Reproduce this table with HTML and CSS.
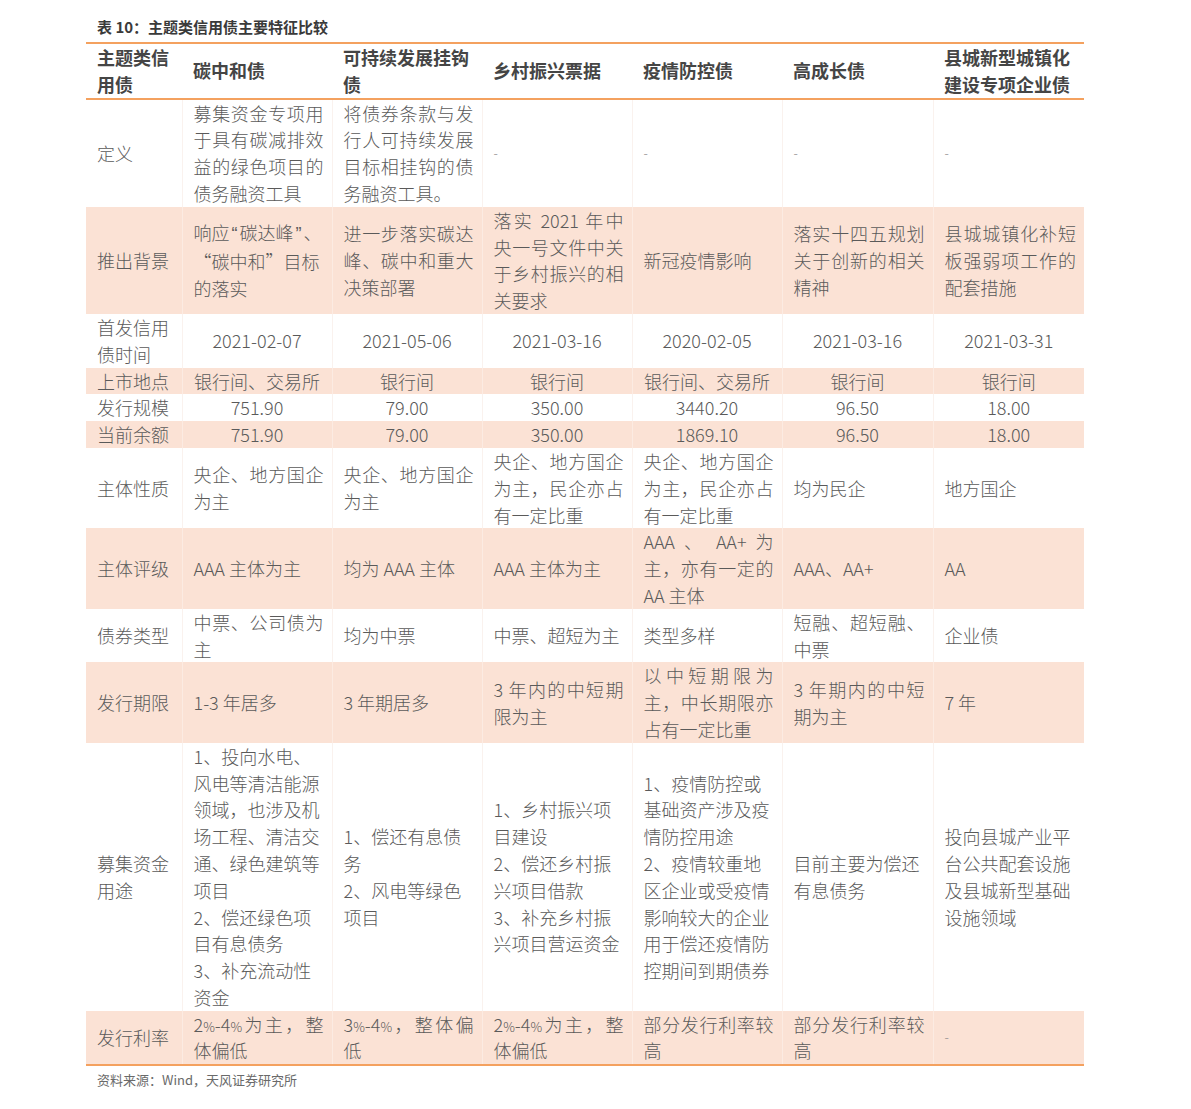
FILE: index.html
```html
<!DOCTYPE html>
<html lang="zh-CN">
<head>
<meta charset="utf-8">
<title>主题类信用债主要特征比较</title>
<link rel="stylesheet" href="styles.css">
</head>
<body>
<div class="page">
  <div class="caption">表 10：主题类信用债主要特征比较</div>
  <table class="cmp">
    <colgroup>
      <col class="c-label">
      <col class="c-std"><col class="c-std"><col class="c-std"><col class="c-std">
      <col class="c-wide"><col class="c-wide">
    </colgroup>
    <thead>
      <tr>
        <th>主题类信用债</th>
        <th>碳中和债</th>
        <th>可持续发展挂钩债</th>
        <th>乡村振兴票据</th>
        <th>疫情防控债</th>
        <th>高成长债</th>
        <th>县城新型城镇化建设专项企业债</th>
      </tr>
    </thead>
    <tbody>
      <tr>
        <td class="lab">定义</td>
        <td>募集资金专项用于具有碳减排效益的绿色项目的债务融资工具</td>
        <td>将债券条款与发行人可持续发展目标相挂钩的债务融资工具。</td>
        <td class="dash">-</td>
        <td class="dash">-</td>
        <td class="dash">-</td>
        <td class="dash">-</td>
      </tr>
      <tr class="pink">
        <td class="lab">推出背景</td>
        <td class="lft">响应<span class="q">“</span>碳达峰<span class="q">”</span>、<br>“碳中和”目标<br>的落实</td>
        <td>进一步落实碳达峰、碳中和重大决策部署</td>
        <td>落实 2021 年中央一号文件中关于乡村振兴的相关要求</td>
        <td>新冠疫情影响</td>
        <td>落实十四五规划关于创新的相关精神</td>
        <td>县城城镇化补短板强弱项工作的配套措施</td>
      </tr>
      <tr>
        <td class="lab">首发信用债时间</td>
        <td class="ctr">2021-02-07</td>
        <td class="ctr">2021-05-06</td>
        <td class="ctr">2021-03-16</td>
        <td class="ctr">2020-02-05</td>
        <td class="ctr">2021-03-16</td>
        <td class="ctr">2021-03-31</td>
      </tr>
      <tr class="pink">
        <td class="lab">上市地点</td>
        <td class="ctr">银行间、交易所</td>
        <td class="ctr">银行间</td>
        <td class="ctr">银行间</td>
        <td class="ctr">银行间、交易所</td>
        <td class="ctr">银行间</td>
        <td class="ctr">银行间</td>
      </tr>
      <tr>
        <td class="lab">发行规模</td>
        <td class="ctr">751.90</td>
        <td class="ctr">79.00</td>
        <td class="ctr">350.00</td>
        <td class="ctr">3440.20</td>
        <td class="ctr">96.50</td>
        <td class="ctr">18.00</td>
      </tr>
      <tr class="pink">
        <td class="lab">当前余额</td>
        <td class="ctr">751.90</td>
        <td class="ctr">79.00</td>
        <td class="ctr">350.00</td>
        <td class="ctr">1869.10</td>
        <td class="ctr">96.50</td>
        <td class="ctr">18.00</td>
      </tr>
      <tr>
        <td class="lab">主体性质</td>
        <td>央企、地方国企为主</td>
        <td>央企、地方国企为主</td>
        <td>央企、地方国企为主，民企亦占有一定比重</td>
        <td>央企、地方国企为主，民企亦占有一定比重</td>
        <td>均为民企</td>
        <td>地方国企</td>
      </tr>
      <tr class="pink">
        <td class="lab">主体评级</td>
        <td>AAA 主体为主</td>
        <td>均为 AAA 主体</td>
        <td>AAA 主体为主</td>
        <td>AAA 、 AA+ 为主，亦有一定的 AA 主体</td>
        <td>AAA、AA+</td>
        <td>AA</td>
      </tr>
      <tr>
        <td class="lab">债券类型</td>
        <td>中票、公司债为主</td>
        <td>均为中票</td>
        <td>中票、超短为主</td>
        <td>类型多样</td>
        <td>短融、超短融、中票</td>
        <td>企业债</td>
      </tr>
      <tr class="pink">
        <td class="lab">发行期限</td>
        <td>1-3 年居多</td>
        <td>3 年期居多</td>
        <td>3 年内的中短期限为主</td>
        <td>以中短期限为主，中长期限亦占有一定比重</td>
        <td>3 年期内的中短期为主</td>
        <td>7 年</td>
      </tr>
      <tr class="list">
        <td class="lab">募集资金用途</td>
        <td>1、投向水电、风电等清洁能源领域，也涉及机场工程、清洁交通、绿色建筑等项目<br>2、偿还绿色项目有息债务<br>3、补充流动性资金</td>
        <td>1、偿还有息债务<br>2、风电等绿色项目</td>
        <td>1、乡村振兴项目建设<br>2、偿还乡村振兴项目借款<br>3、补充乡村振兴项目营运资金</td>
        <td>1、疫情防控或基础资产涉及疫情防控用途<br>2、疫情较重地区企业或受疫情影响较大的企业用于偿还疫情防控期间到期债券</td>
        <td>目前主要为偿还有息债务</td>
        <td>投向县城产业平台公共配套设施及县城新型基础设施领域</td>
      </tr>
      <tr class="pink">
        <td class="lab">发行利率</td>
        <td>2<span class="pct">%</span>-4<span class="pct">%</span>为主，整体偏低</td>
        <td>3<span class="pct">%</span>-4<span class="pct">%</span>，整体偏低</td>
        <td>2<span class="pct">%</span>-4<span class="pct">%</span>为主，整体偏低</td>
        <td>部分发行利率较高</td>
        <td>部分发行利率较高</td>
        <td class="dash">-</td>
      </tr>
    </tbody>
  </table>
  <div class="source">资料来源：Wind，天风证券研究所</div>
</div>
</body>
</html>
```

FILE: styles.css
```css
html, body {
  margin: 0;
  padding: 0;
  background: #ffffff;
}

body {
  font-family: "Noto Sans CJK SC", "Noto Sans", sans-serif;
  color: #555555;
}

.page {
  padding: 17px 0 0 86px;
  width: 998px;
}

.caption {
  font-size: 15px;
  font-weight: 700;
  color: #3a3a3a;
  line-height: 20px;
  padding-left: 11px;
  margin-bottom: 5px;
}

.cmp {
  width: 998px;
  table-layout: fixed;
  border-collapse: collapse;
  border-top: 2px solid #f4a15f;
  border-bottom: 2px solid #f4a15f;
  font-size: 18px;
  line-height: 26.8px;
}

.c-label { width: 96px; }
.c-std { width: 150px; }
.c-wide { width: 151px; }

.cmp th {
  font-weight: 700;
  color: #454545;
  text-align: left;
  vertical-align: middle;
  padding: 0 8px 0 11px;
  border-bottom: 2px solid #f4a15f;
}

.cmp td {
  padding: 0 8px 0 11px;
  vertical-align: middle;
  text-align: justify;
  color: #5a5a5a;
  font-weight: 300;
  border-left: 1px solid #faf2ee;
}

.cmp td:first-child {
  border-left: none;
}

.cmp tr.pink td {
  background: #fbe2d5;
  border-left-color: #fcebe2;
}

.cmp td.lab,
.cmp td.lft,
.cmp tr.list td {
  text-align: left;
}

.cmp td.ctr {
  text-align: center;
  padding: 0 4px;
}

.cmp td.dash {
  font-size: 13px;
  color: #8a8a8a;
  text-align: left;
}

.q {
  font-family: "Liberation Sans", sans-serif;
  padding: 0 2px;
}

.pct {
  font-size: 13px;
  line-height: 0;
}

.source {
  font-size: 13px;
  color: #6a6a6a;
  line-height: 18px;
  padding: 5px 0 0 11px;
}
```
